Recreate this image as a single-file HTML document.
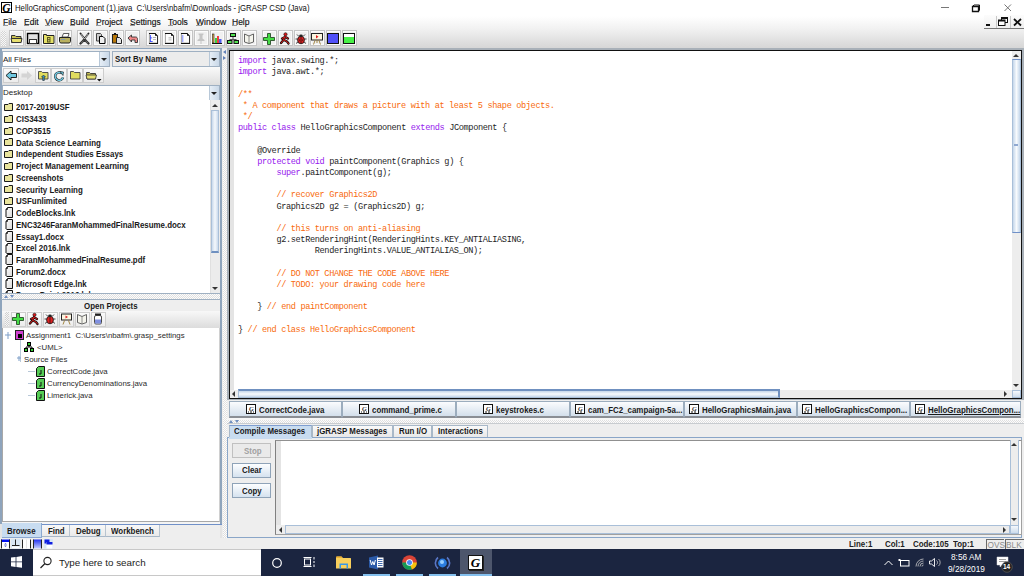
<!DOCTYPE html>
<html><head><meta charset="utf-8">
<style>
*{box-sizing:border-box;margin:0;padding:0}
html,body{width:1024px;height:576px;overflow:hidden;background:#eeeeee;font-family:"Liberation Sans",sans-serif;color:#000}
.a{position:absolute}
.t{position:absolute;white-space:nowrap;line-height:1}
.b{font-weight:bold}
.cx{transform:scaleX(.92);transform-origin:0 0}
svg{position:absolute;overflow:visible}
.tb{position:absolute;top:30px;width:15px;height:16px;border:1px solid #c4c4c4;box-shadow:inset 0 0 0 1px #fbfbfb;background:#f0f0f0}
.code{position:absolute;font-family:"Liberation Mono",monospace;font-size:8.6px;letter-spacing:-0.36px;white-space:pre;line-height:11.2px;color:#1e1e1e}
.kw{color:#9618ee}
.cm{color:#f86a0c}
.fl{position:absolute;left:16px;font-weight:bold;font-size:8.6px;transform:scaleX(.92);transform-origin:0 0;white-space:nowrap;line-height:1;color:#1a1a1a}
.ftab{position:absolute;top:401px;height:17px;background:linear-gradient(#fbfcfe,#d3dfeb);border:1px solid #9cadbe;border-bottom:2px solid #8a8e94;font-size:8px;font-weight:bold;white-space:nowrap;color:#1a1a1a}
.gi{position:absolute;top:3px;width:10px;height:10px;border:1px solid #111;background:#fff}
.mtab{position:absolute;top:425px;height:13px;background:linear-gradient(#fafafa,#e6e6e6);border:1px solid #a8b8c8;border-bottom:none;font-size:8px;font-weight:bold;white-space:nowrap;color:#1a1a1a}
.btn{position:absolute;left:232px;width:39px;height:15px;border:1px solid #8fa3b8;background:linear-gradient(#fdfeff,#d5e2ef);font-size:8px;font-weight:bold;text-align:center;line-height:15px;color:#1a1a1a}
.tr{position:absolute;font-size:7.8px;white-space:nowrap;line-height:1;color:#2a2a2a}
</style></head><body>
<div class="a" style="left:0px;top:0px;width:1024px;height:14px;background:#fff"></div>
<div class="a" style="left:1px;top:2px;width:11px;height:11px;border:1px solid #000;background:#fff;font-family:'Liberation Serif',serif;font-weight:bold;font-style:italic;font-size:11.5px;line-height:10px;text-align:center;color:#000">G</div>
<div class="t" style="left:14.5px;top:3.7px;font-size:8.8px;color:#111;transform:scaleX(.885);transform-origin:0 0">HelloGraphicsComponent (1).java&nbsp; C:\Users\nbafm\Downloads - jGRASP CSD (Java)</div>
<div class="a" style="left:941px;top:7px;width:8px;height:1px;background:#777"></div>
<svg style="left:971px;top:4px" width="10" height="8"><path d="M1.5 2.5V7.5H7.5V2.5Z" fill="none" stroke="#111" stroke-width="1.3"/><path d="M1.5 2.5L3 1H8.5L7.5 2.5M8.5 1V6L7.5 7.5" fill="none" stroke="#111" stroke-width="1"/></svg>
<svg style="left:1004px;top:4px" width="8" height="8"><path d="M0.5 0.5L7 7M7 0.5L0.5 7" stroke="#666" stroke-width="0.9"/></svg>
<div class="a" style="left:0px;top:14px;width:1024px;height:15px;background:linear-gradient(#fff 15%,#f1f1f1)"></div>
<div class="t" style="left:3px;top:17.5px;font-size:8.5px;color:#111;-webkit-text-stroke:0.15px #111">File</div>
<div class="a" style="left:3px;top:25px;width:5px;height:1px;background:#999"></div>
<div class="t" style="left:24px;top:17.5px;font-size:8.5px;color:#111;-webkit-text-stroke:0.15px #111">Edit</div>
<div class="a" style="left:24px;top:25px;width:5px;height:1px;background:#999"></div>
<div class="t" style="left:45px;top:17.5px;font-size:8.5px;color:#111;-webkit-text-stroke:0.15px #111">View</div>
<div class="a" style="left:45px;top:25px;width:5px;height:1px;background:#999"></div>
<div class="t" style="left:70px;top:17.5px;font-size:8.5px;color:#111;-webkit-text-stroke:0.15px #111">Build</div>
<div class="a" style="left:70px;top:25px;width:5px;height:1px;background:#999"></div>
<div class="t" style="left:96px;top:17.5px;font-size:8.5px;color:#111;-webkit-text-stroke:0.15px #111">Project</div>
<div class="a" style="left:96px;top:25px;width:5px;height:1px;background:#999"></div>
<div class="t" style="left:130px;top:17.5px;font-size:8.5px;color:#111;-webkit-text-stroke:0.15px #111">Settings</div>
<div class="a" style="left:130px;top:25px;width:5px;height:1px;background:#999"></div>
<div class="t" style="left:168px;top:17.5px;font-size:8.5px;color:#111;-webkit-text-stroke:0.15px #111">Tools</div>
<div class="a" style="left:168px;top:25px;width:5px;height:1px;background:#999"></div>
<div class="t" style="left:196px;top:17.5px;font-size:8.5px;color:#111;-webkit-text-stroke:0.15px #111">Window</div>
<div class="a" style="left:196px;top:25px;width:6px;height:1px;background:#999"></div>
<div class="t" style="left:232px;top:17.5px;font-size:8.5px;color:#111;-webkit-text-stroke:0.15px #111">Help</div>
<div class="a" style="left:232px;top:25px;width:5px;height:1px;background:#999"></div>
<div class="a" style="left:984px;top:15px;width:40px;height:14px;background:linear-gradient(#fcfcfc,#f0f0f0);border-bottom:1px solid #777"></div>
<div class="a" style="left:996px;top:16px;width:1px;height:12px;background:#c8c8c8"></div>
<div class="a" style="left:1010px;top:16px;width:1px;height:12px;background:#c8c8c8"></div>
<div class="a" style="left:986px;top:24px;width:4px;height:1.5px;background:#111"></div>
<svg style="left:998px;top:17px" width="11" height="9"><rect x="3.5" y="0.5" width="6" height="5" fill="none" stroke="#111" stroke-width="1"/><rect x="3.5" y="0.5" width="6" height="1.5" fill="#111"/><rect x="0.5" y="3" width="6.5" height="5.5" fill="#fff" stroke="#111" stroke-width="1"/><rect x="0.5" y="3" width="6.5" height="1.5" fill="#111"/></svg>
<svg style="left:1013px;top:18px" width="9" height="8"><path d="M1 1L8 7.5M8 1L1 7.5" stroke="#111" stroke-width="1.8"/></svg>
<div class="a" style="left:0px;top:29px;width:1024px;height:19px;background:linear-gradient(#f1f1f1,#d6d6d6)"></div>
<div class="a" style="left:0px;top:48px;width:1024px;height:1px;background:#7d8e9e"></div>
<div class="a" style="left:1px;top:31px;width:5px;height:15px;background:conic-gradient(#d4d4d4 25%,#f8f8f8 0 50%,#d4d4d4 0 75%,#f8f8f8 0) 0 0/2px 2px"></div>
<div class="tb" style="left:9px"></div>
<div class="tb" style="left:25px"></div>
<div class="tb" style="left:41px"></div>
<div class="tb" style="left:57px"></div>
<div class="tb" style="left:77px"></div>
<div class="tb" style="left:93px"></div>
<div class="tb" style="left:109px"></div>
<div class="tb" style="left:125px"></div>
<div class="tb" style="left:146px"></div>
<div class="tb" style="left:162px"></div>
<div class="tb" style="left:178px"></div>
<div class="tb" style="left:194px"></div>
<div class="tb" style="left:210px"></div>
<div class="tb" style="left:226px"></div>
<div class="tb" style="left:242px"></div>
<div class="tb" style="left:262px"></div>
<div class="tb" style="left:278px"></div>
<div class="tb" style="left:294px"></div>
<div class="tb" style="left:310px"></div>
<div class="tb" style="left:326px"></div>
<div class="tb" style="left:342px"></div>
<div class="a" style="left:0px;top:48px;width:222px;height:490px;background:#eeeeee;border:1px solid #8ea4bc;border-width:1px 2px 0 2px"></div>
<div class="a" style="left:2px;top:51px;width:108px;height:16px;background:#fff;border:1px solid #9fb0c2"></div>
<div class="a" style="left:99px;top:52px;width:10px;height:14px;background:linear-gradient(90deg,#e6eef6,#c9d8e8);border-left:1px solid #b8c8d8"></div>
<div class="t" style="left:3px;top:56px;font-size:8px;color:#222">All Files</div>
<div class="a" style="left:112px;top:51px;width:108px;height:16px;background:#ececec;border:1px solid #9fb0c2"></div>
<div class="a" style="left:209px;top:52px;width:10px;height:14px;background:linear-gradient(90deg,#e6eef6,#c9d8e8);border-left:1px solid #b8c8d8"></div>
<div class="t b cx" style="left:114.5px;top:54.70px;font-size:8.6px;color:#1a1a1a;">Sort By Name</div>
<div class="a" style="left:2px;top:67px;width:218px;height:18px;background:linear-gradient(#fafafa,#dedede)"></div>
<div class="a" style="left:3px;top:68px;width:16px;height:15px;border:1px solid #cdcdcd;background:linear-gradient(#fafafa,#ececec)"></div>
<div class="a" style="left:35px;top:68px;width:16px;height:15px;border:1px solid #cdcdcd;background:linear-gradient(#fafafa,#ececec)"></div>
<div class="a" style="left:51px;top:68px;width:16px;height:15px;border:1px solid #cdcdcd;background:linear-gradient(#fafafa,#ececec)"></div>
<div class="a" style="left:67px;top:68px;width:16px;height:15px;border:1px solid #cdcdcd;background:linear-gradient(#fafafa,#ececec)"></div>
<div class="a" style="left:83px;top:68px;width:21px;height:15px;border:1px solid #cdcdcd;background:linear-gradient(#fafafa,#ececec)"></div>
<div class="a" style="left:2px;top:85px;width:218px;height:16px;background:#fff;border:1px solid #9fb0c2"></div>
<div class="a" style="left:209px;top:86px;width:10px;height:14px;background:linear-gradient(90deg,#e6eef6,#c9d8e8);border-left:1px solid #b8c8d8"></div>
<div class="t" style="left:3px;top:89px;font-size:8px;color:#222">Desktop</div>
<svg style="left:101px;top:58px" width="6" height="4"><path d="M0 0H6L3 3Z" fill="#222"/></svg>
<svg style="left:211px;top:58px" width="6" height="4"><path d="M0 0H6L3 3Z" fill="#222"/></svg>
<svg style="left:211px;top:92px" width="6" height="4"><path d="M0 0H6L3 3Z" fill="#222"/></svg>
<div class="a" style="left:2px;top:100px;width:218px;height:194px;background:#fff;border-bottom:1px solid #9fb0c2"></div>
<div class="a" style="left:2px;top:100px;width:208px;height:193px;overflow:hidden">
<svg style="left:2px;top:3.00px" width="10" height="8"><path d="M0.5 1.5H4L5 0.5H8.5V7.5H0.5Z" fill="#e8e49c" stroke="#1a1a1a" stroke-width="1"/></svg>
<div class="fl" style="left:14px;top:3.40px">2017-2019USF</div>
<svg style="left:2px;top:14.75px" width="10" height="8"><path d="M0.5 1.5H4L5 0.5H8.5V7.5H0.5Z" fill="#e8e49c" stroke="#1a1a1a" stroke-width="1"/></svg>
<div class="fl" style="left:14px;top:15.15px">CIS3433</div>
<svg style="left:2px;top:26.50px" width="10" height="8"><path d="M0.5 1.5H4L5 0.5H8.5V7.5H0.5Z" fill="#e8e49c" stroke="#1a1a1a" stroke-width="1"/></svg>
<div class="fl" style="left:14px;top:26.90px">COP3515</div>
<svg style="left:2px;top:38.25px" width="10" height="8"><path d="M0.5 1.5H4L5 0.5H8.5V7.5H0.5Z" fill="#e8e49c" stroke="#1a1a1a" stroke-width="1"/></svg>
<div class="fl" style="left:14px;top:38.65px">Data Science Learning</div>
<svg style="left:2px;top:50.00px" width="10" height="8"><path d="M0.5 1.5H4L5 0.5H8.5V7.5H0.5Z" fill="#e8e49c" stroke="#1a1a1a" stroke-width="1"/></svg>
<div class="fl" style="left:14px;top:50.40px">Independent Studies Essays</div>
<svg style="left:2px;top:61.75px" width="10" height="8"><path d="M0.5 1.5H4L5 0.5H8.5V7.5H0.5Z" fill="#e8e49c" stroke="#1a1a1a" stroke-width="1"/></svg>
<div class="fl" style="left:14px;top:62.15px">Project Management Learning</div>
<svg style="left:2px;top:73.50px" width="10" height="8"><path d="M0.5 1.5H4L5 0.5H8.5V7.5H0.5Z" fill="#e8e49c" stroke="#1a1a1a" stroke-width="1"/></svg>
<div class="fl" style="left:14px;top:73.90px">Screenshots</div>
<svg style="left:2px;top:85.25px" width="10" height="8"><path d="M0.5 1.5H4L5 0.5H8.5V7.5H0.5Z" fill="#e8e49c" stroke="#1a1a1a" stroke-width="1"/></svg>
<div class="fl" style="left:14px;top:85.65px">Security Learning</div>
<svg style="left:2px;top:97.00px" width="10" height="8"><path d="M0.5 1.5H4L5 0.5H8.5V7.5H0.5Z" fill="#e8e49c" stroke="#1a1a1a" stroke-width="1"/></svg>
<div class="fl" style="left:14px;top:97.40px">USFunlimited</div>
<svg style="left:3px;top:107.25px" width="9" height="12"><defs><linearGradient id="dg9" x1="0" y1="0" x2="1" y2="1"><stop offset="0" stop-color="#fff"/><stop offset="1" stop-color="#d8d8d8"/></linearGradient></defs><path d="M1 10.5V2.5L2.5 0.5H7.5V10.5Z" fill="url(#dg9)"/><path d="M1 10V2.5L2.5 0.5H7.5V10.5H1.5" fill="none" stroke="#111" stroke-width="1"/><path d="M1 2.5H2.5V1" stroke="#111" stroke-width="0.8" fill="none"/></svg>
<div class="fl" style="left:14px;top:109.15px">CodeBlocks.lnk</div>
<svg style="left:3px;top:119.00px" width="9" height="12"><defs><linearGradient id="dg10" x1="0" y1="0" x2="1" y2="1"><stop offset="0" stop-color="#fff"/><stop offset="1" stop-color="#d8d8d8"/></linearGradient></defs><path d="M1 10.5V2.5L2.5 0.5H7.5V10.5Z" fill="url(#dg10)"/><path d="M1 10V2.5L2.5 0.5H7.5V10.5H1.5" fill="none" stroke="#111" stroke-width="1"/><path d="M1 2.5H2.5V1" stroke="#111" stroke-width="0.8" fill="none"/></svg>
<div class="fl" style="left:14px;top:120.90px">ENC3246FaranMohammedFinalResume.docx</div>
<svg style="left:3px;top:130.75px" width="9" height="12"><defs><linearGradient id="dg11" x1="0" y1="0" x2="1" y2="1"><stop offset="0" stop-color="#fff"/><stop offset="1" stop-color="#d8d8d8"/></linearGradient></defs><path d="M1 10.5V2.5L2.5 0.5H7.5V10.5Z" fill="url(#dg11)"/><path d="M1 10V2.5L2.5 0.5H7.5V10.5H1.5" fill="none" stroke="#111" stroke-width="1"/><path d="M1 2.5H2.5V1" stroke="#111" stroke-width="0.8" fill="none"/></svg>
<div class="fl" style="left:14px;top:132.65px">Essay1.docx</div>
<svg style="left:3px;top:142.50px" width="9" height="12"><defs><linearGradient id="dg12" x1="0" y1="0" x2="1" y2="1"><stop offset="0" stop-color="#fff"/><stop offset="1" stop-color="#d8d8d8"/></linearGradient></defs><path d="M1 10.5V2.5L2.5 0.5H7.5V10.5Z" fill="url(#dg12)"/><path d="M1 10V2.5L2.5 0.5H7.5V10.5H1.5" fill="none" stroke="#111" stroke-width="1"/><path d="M1 2.5H2.5V1" stroke="#111" stroke-width="0.8" fill="none"/></svg>
<div class="fl" style="left:14px;top:144.40px">Excel 2016.lnk</div>
<svg style="left:3px;top:154.25px" width="9" height="12"><defs><linearGradient id="dg13" x1="0" y1="0" x2="1" y2="1"><stop offset="0" stop-color="#fff"/><stop offset="1" stop-color="#d8d8d8"/></linearGradient></defs><path d="M1 10.5V2.5L2.5 0.5H7.5V10.5Z" fill="url(#dg13)"/><path d="M1 10V2.5L2.5 0.5H7.5V10.5H1.5" fill="none" stroke="#111" stroke-width="1"/><path d="M1 2.5H2.5V1" stroke="#111" stroke-width="0.8" fill="none"/></svg>
<div class="fl" style="left:14px;top:156.15px">FaranMohammedFinalResume.pdf</div>
<svg style="left:3px;top:166.00px" width="9" height="12"><defs><linearGradient id="dg14" x1="0" y1="0" x2="1" y2="1"><stop offset="0" stop-color="#fff"/><stop offset="1" stop-color="#d8d8d8"/></linearGradient></defs><path d="M1 10.5V2.5L2.5 0.5H7.5V10.5Z" fill="url(#dg14)"/><path d="M1 10V2.5L2.5 0.5H7.5V10.5H1.5" fill="none" stroke="#111" stroke-width="1"/><path d="M1 2.5H2.5V1" stroke="#111" stroke-width="0.8" fill="none"/></svg>
<div class="fl" style="left:14px;top:167.90px">Forum2.docx</div>
<svg style="left:3px;top:177.75px" width="9" height="12"><defs><linearGradient id="dg15" x1="0" y1="0" x2="1" y2="1"><stop offset="0" stop-color="#fff"/><stop offset="1" stop-color="#d8d8d8"/></linearGradient></defs><path d="M1 10.5V2.5L2.5 0.5H7.5V10.5Z" fill="url(#dg15)"/><path d="M1 10V2.5L2.5 0.5H7.5V10.5H1.5" fill="none" stroke="#111" stroke-width="1"/><path d="M1 2.5H2.5V1" stroke="#111" stroke-width="0.8" fill="none"/></svg>
<div class="fl" style="left:14px;top:179.65px">Microsoft Edge.lnk</div>
<svg style="left:3px;top:189.50px" width="9" height="12"><defs><linearGradient id="dg16" x1="0" y1="0" x2="1" y2="1"><stop offset="0" stop-color="#fff"/><stop offset="1" stop-color="#d8d8d8"/></linearGradient></defs><path d="M1 10.5V2.5L2.5 0.5H7.5V10.5Z" fill="url(#dg16)"/><path d="M1 10V2.5L2.5 0.5H7.5V10.5H1.5" fill="none" stroke="#111" stroke-width="1"/><path d="M1 2.5H2.5V1" stroke="#111" stroke-width="0.8" fill="none"/></svg>
<div class="fl" style="left:14px;top:191.40px">PowerPoint 2016.lnk</div>
</div>
<div class="a" style="left:210px;top:100px;width:10px;height:193px;background:#ececec;border-left:1px solid #e0e0e0"></div>
<div class="a" style="left:211px;top:110px;width:8px;height:143px;background:linear-gradient(90deg,#c9d9ec,#f4f8fc 50%,#c9d9ec);border:1px solid #a9bfd8;border-bottom:2px solid #6f90c0"></div>
<svg style="left:212px;top:104px" width="6" height="4"><path d="M0 3H6L3 0Z" fill="#333"/></svg>
<svg style="left:212px;top:287px" width="6" height="4"><path d="M0 0H6L3 3Z" fill="#333"/></svg>
<div class="a" style="left:2px;top:294px;width:218px;height:5px;background:conic-gradient(#e0e0e0 25%,#fcfcfc 0 50%,#e0e0e0 0 75%,#fcfcfc 0) 0 0/2px 2px"></div>
<svg style="left:4px;top:295px" width="12" height="4"><path d="M0 3H4L2 0Z M6 0H10L8 3Z" fill="#6f8fc0"/></svg>
<div class="a" style="left:1px;top:299px;width:220px;height:1px;background:#9fb0c2"></div>
<div class="t b cx" style="left:84px;top:301.50px;font-size:8.6px;color:#1a1a1a;">Open Projects</div>
<div class="a" style="left:2px;top:311px;width:218px;height:17px;background:linear-gradient(#f8f8f8,#dcdcdc)"></div>
<div class="a" style="left:5px;top:312px;width:4px;height:14px;background:conic-gradient(#d0d0d0 25%,#f6f6f6 0 50%,#d0d0d0 0 75%,#f6f6f6 0) 0 0/2px 2px"></div>
<div class="a" style="left:11px;top:312px;width:15px;height:15px;border:1px solid #cdcdcd;background:linear-gradient(#fafafa,#ececec)"></div>
<div class="a" style="left:27px;top:312px;width:15px;height:15px;border:1px solid #cdcdcd;background:linear-gradient(#fafafa,#ececec)"></div>
<div class="a" style="left:43px;top:312px;width:15px;height:15px;border:1px solid #cdcdcd;background:linear-gradient(#fafafa,#ececec)"></div>
<div class="a" style="left:59px;top:312px;width:15px;height:15px;border:1px solid #cdcdcd;background:linear-gradient(#fafafa,#ececec)"></div>
<div class="a" style="left:75px;top:312px;width:15px;height:15px;border:1px solid #cdcdcd;background:linear-gradient(#fafafa,#ececec)"></div>
<div class="a" style="left:91px;top:312px;width:15px;height:15px;border:1px solid #cdcdcd;background:linear-gradient(#fafafa,#ececec)"></div>
<div class="a" style="left:2px;top:328px;width:218px;height:194px;background:#fff"></div>
<svg style="left:4px;top:332px" width="8" height="8"><path d="M4 0V7M1 3H7" stroke="#7f9fc8" stroke-width="1"/></svg>
<div class="a" style="left:15px;top:330px;width:9px;height:10px;background:#d040d0;border:1px solid #222"></div>
<div class="a" style="left:18px;top:334px;width:4px;height:4px;background:#000"></div>
<div class="tr" style="left:26px;top:332px">Assignment1&nbsp; C:\Users\nbafm\.grasp_settings</div>
<div class="a" style="left:20px;top:340px;width:1px;height:22px;background:#b8c8d8"></div>
<svg style="left:24px;top:342px" width="11" height="10"><rect x="3.5" y="0.5" width="3" height="3" fill="#3c3" stroke="#000"/><rect x="0.5" y="6.5" width="3" height="3" fill="#3c3" stroke="#000"/><rect x="6.5" y="6.5" width="3" height="3" fill="#3c3" stroke="#000"/><path d="M5 3V5M2 5H8V7M2 5V7" stroke="#000" fill="none"/></svg>
<div class="tr" style="left:37px;top:344px">&lt;UML&gt;</div>
<svg style="left:16px;top:356px" width="6" height="6"><path d="M3 0V5M1 2H5" stroke="#7f9fc8"/></svg>
<div class="tr" style="left:24px;top:356px">Source Files</div>
<div class="a" style="left:28px;top:371.0px;width:7px;height:1px;background:#b8c8d8"></div>
<svg style="left:36px;top:366.00px" width="9" height="11"><path d="M0.5 10.5V2.5L2.5 0.5H8.5V10.5Z" fill="#5c5" stroke="#111"/><path d="M5 4V8H3" stroke="#111" fill="none"/></svg>
<div class="tr" style="left:47px;top:368.00px">CorrectCode.java</div>
<div class="a" style="left:28px;top:382.75px;width:7px;height:1px;background:#b8c8d8"></div>
<svg style="left:36px;top:377.75px" width="9" height="11"><path d="M0.5 10.5V2.5L2.5 0.5H8.5V10.5Z" fill="#5c5" stroke="#111"/><path d="M5 4V8H3" stroke="#111" fill="none"/></svg>
<div class="tr" style="left:47px;top:379.75px">CurrencyDenominations.java</div>
<div class="a" style="left:28px;top:394.5px;width:7px;height:1px;background:#b8c8d8"></div>
<svg style="left:36px;top:389.50px" width="9" height="11"><path d="M0.5 10.5V2.5L2.5 0.5H8.5V10.5Z" fill="#5c5" stroke="#111"/><path d="M5 4V8H3" stroke="#111" fill="none"/></svg>
<div class="tr" style="left:47px;top:391.50px">Limerick.java</div>
<div class="a" style="left:0px;top:524px;width:2px;height:14px;background:#e4e4e4"></div>
<div class="a" style="left:220px;top:524px;width:2px;height:14px;background:#e4e4e4"></div>
<div class="a" style="left:2px;top:328px;width:218px;height:194px;border:1px solid #a8a8a8;border-right-color:#d0d0d0;border-top:none"></div>
<div class="a" style="left:2px;top:522px;width:218px;height:2px;background:#f4f4f4"></div>
<div class="a" style="left:42px;top:524px;width:180px;height:1px;background:#7090c8"></div>
<div class="a" style="left:2px;top:523px;width:40px;height:14.5px;background:#c8dcf0;border-right:1px solid #8aa8d0;border-bottom:1px solid #8aa8d0"></div>
<div class="t b cx" style="left:7px;top:527.20px;font-size:8.6px;color:#1a1a1a;">Browse</div>
<div class="a" style="left:42px;top:525px;width:27.5px;height:12px;background:linear-gradient(#f8f8f8,#eaeaea);border-right:1px solid #b8c4d0;border-bottom:1px solid #a8b8c8"></div>
<div class="t b cx" style="left:47.6px;top:527.20px;font-size:8.6px;color:#1a1a1a;">Find</div>
<div class="a" style="left:69.5px;top:525px;width:36px;height:12px;background:linear-gradient(#f8f8f8,#eaeaea);border-right:1px solid #b8c4d0;border-bottom:1px solid #a8b8c8"></div>
<div class="t b cx" style="left:75.5px;top:527.20px;font-size:8.6px;color:#1a1a1a;">Debug</div>
<div class="a" style="left:105.5px;top:525px;width:54px;height:12px;background:linear-gradient(#f8f8f8,#eaeaea);border-right:1px solid #b8c4d0;border-bottom:1px solid #a8b8c8"></div>
<div class="t b cx" style="left:110.8px;top:527.20px;font-size:8.6px;color:#1a1a1a;">Workbench</div>
<div class="a" style="left:222px;top:48px;width:6px;height:490px;background:#eeeeee"></div>
<div class="a" style="left:223px;top:62px;width:4px;height:476px;background:conic-gradient(#e0e0e0 25%,#fcfcfc 0 50%,#e0e0e0 0 75%,#fcfcfc 0) 0 0/2px 2px"></div>
<svg style="left:223px;top:50px" width="4" height="11"><path d="M3 0V4L0 2Z M0 6V10L3 8Z" fill="#5f7fb8"/></svg>
<div class="a" style="left:227px;top:48px;width:797px;height:352px;background:#a8b0b8"></div>
<div class="a" style="left:229px;top:50px;width:793px;height:349px;border:1.5px solid #111;background:#fff"></div>
<div class="a" style="left:230px;top:51px;width:4px;height:339px;background:#e4e4e4"></div>
<div class="a" style="left:1012px;top:51px;width:9px;height:339px;background:#ededed"></div>
<div class="a" style="left:1012px;top:59px;width:9px;height:174px;background:linear-gradient(90deg,#c4d6ea,#f7fafd 50%,#c4d6ea);border:1px solid #a9bfd8;border-top:1px solid #7090c8;border-bottom:1px solid #7090c8"></div>
<div class="a" style="left:1014px;top:144px;width:4px;height:2px;background:#8fa8d0"></div>
<svg style="left:1013px;top:54px" width="6" height="4"><path d="M0 3H6L3 0Z" fill="#333"/></svg>
<svg style="left:1013px;top:384px" width="6" height="4"><path d="M0 0H6L3 3Z" fill="#333"/></svg>
<div class="a" style="left:230px;top:390px;width:782px;height:8px;background:#ededed"></div>
<div class="a" style="left:238px;top:389px;width:542px;height:9px;background:linear-gradient(#c4d6ea,#f7fafd 50%,#c4d6ea);border:1px solid #a9bfd8;border-top:2px solid #6f90c0;border-right:2px solid #6f90c0"></div>
<svg style="left:232px;top:391px" width="4" height="6"><path d="M3 0V6L0 3Z" fill="#333"/></svg>
<svg style="left:1004px;top:391px" width="4" height="6"><path d="M0 0V6L3 3Z" fill="#333"/></svg>
<div class="a" style="left:1012px;top:390px;width:9px;height:8px;background:linear-gradient(#f5f8fc,#cddcec);border:1px solid #a9bfd8"></div>
<div class="code" style="left:238px;top:56px"><span class="kw">import</span> javax.swing.*;
<span class="kw">import</span> java.awt.*;

<span class="cm">/**
 * A component that draws a picture with at least 5 shape objects.
 */</span>
<span class="kw">public</span> <span class="kw">class</span> HelloGraphicsComponent <span class="kw">extends</span> JComponent {

    @Override
    <span class="kw">protected</span> <span class="kw">void</span> paintComponent(Graphics g) {
        <span class="kw">super</span>.paintComponent(g);

        <span class="cm">// recover Graphics2D</span>
        Graphics2D g2 = (Graphics2D) g;

        <span class="cm">// this turns on anti-aliasing</span>
        g2.setRenderingHint(RenderingHints.KEY_ANTIALIASING,
                RenderingHints.VALUE_ANTIALIAS_ON);

        <span class="cm">// DO NOT CHANGE THE CODE ABOVE HERE</span>
        <span class="cm">// TODO: your drawing code here</span>

    } <span class="cm">// end paintComponent</span>

} <span class="cm">// end class HelloGraphicsComponent</span></div>
<div class="a" style="left:227px;top:400px;width:797px;height:18px;background:#eeeeee"></div>
<div class="ftab" style="left:229px;width:113px"></div>
<div class="gi" style="left:246px;top:404px"><div style="position:absolute;left:2px;top:0.5px;font-family:Liberation Serif;font-style:italic;font-weight:bold;font-size:6.5px;line-height:6px;color:#222">G</div><div style="position:absolute;left:1px;top:6px;width:6px;height:2px;background:repeating-linear-gradient(90deg,#888 0 1px,#fff 1px 1.5px)"></div></div>
<div class="t b cx" style="left:259px;top:405.6px;font-size:8.6px;color:#1a1a1a">CorrectCode.java</div>
<div class="ftab" style="left:342px;width:114px"></div>
<div class="gi" style="left:359px;top:404px"><div style="position:absolute;left:2px;top:0.5px;font-family:Liberation Serif;font-style:italic;font-weight:bold;font-size:6.5px;line-height:6px;color:#222">G</div><div style="position:absolute;left:1px;top:6px;width:6px;height:2px;background:repeating-linear-gradient(90deg,#888 0 1px,#fff 1px 1.5px)"></div></div>
<div class="t b cx" style="left:372px;top:405.6px;font-size:8.6px;color:#1a1a1a">command_prime.c</div>
<div class="ftab" style="left:456px;width:114px"></div>
<div class="gi" style="left:483px;top:404px"><div style="position:absolute;left:2px;top:0.5px;font-family:Liberation Serif;font-style:italic;font-weight:bold;font-size:6.5px;line-height:6px;color:#222">G</div><div style="position:absolute;left:1px;top:6px;width:6px;height:2px;background:repeating-linear-gradient(90deg,#888 0 1px,#fff 1px 1.5px)"></div></div>
<div class="t b cx" style="left:496px;top:405.6px;font-size:8.6px;color:#1a1a1a">keystrokes.c</div>
<div class="ftab" style="left:570px;width:114px"></div>
<div class="gi" style="left:575px;top:404px"><div style="position:absolute;left:2px;top:0.5px;font-family:Liberation Serif;font-style:italic;font-weight:bold;font-size:6.5px;line-height:6px;color:#222">G</div><div style="position:absolute;left:1px;top:6px;width:6px;height:2px;background:repeating-linear-gradient(90deg,#888 0 1px,#fff 1px 1.5px)"></div></div>
<div class="t b cx" style="left:588px;top:405.6px;font-size:8.6px;color:#1a1a1a">cam_FC2_campaign-5a...</div>
<div class="ftab" style="left:684px;width:113px"></div>
<div class="gi" style="left:689px;top:404px"><div style="position:absolute;left:2px;top:0.5px;font-family:Liberation Serif;font-style:italic;font-weight:bold;font-size:6.5px;line-height:6px;color:#222">G</div><div style="position:absolute;left:1px;top:6px;width:6px;height:2px;background:repeating-linear-gradient(90deg,#888 0 1px,#fff 1px 1.5px)"></div></div>
<div class="t b cx" style="left:702px;top:405.6px;font-size:8.6px;color:#1a1a1a">HelloGraphicsMain.java</div>
<div class="ftab" style="left:797px;width:113px"></div>
<div class="gi" style="left:802px;top:404px"><div style="position:absolute;left:2px;top:0.5px;font-family:Liberation Serif;font-style:italic;font-weight:bold;font-size:6.5px;line-height:6px;color:#222">G</div><div style="position:absolute;left:1px;top:6px;width:6px;height:2px;background:repeating-linear-gradient(90deg,#888 0 1px,#fff 1px 1.5px)"></div></div>
<div class="t b cx" style="left:815px;top:405.6px;font-size:8.6px;color:#1a1a1a">HelloGraphicsCompon...</div>
<div class="ftab" style="left:910px;width:111px"></div>
<div class="gi" style="left:915px;top:404px"><div style="position:absolute;left:2px;top:0.5px;font-family:Liberation Serif;font-style:italic;font-weight:bold;font-size:6.5px;line-height:6px;color:#222">G</div><div style="position:absolute;left:1px;top:6px;width:6px;height:2px;background:repeating-linear-gradient(90deg,#888 0 1px,#fff 1px 1.5px)"></div></div>
<div class="t b cx" style="left:928px;top:405.6px;font-size:8.6px;color:#1a1a1a;text-decoration:underline">HelloGraphicsCompon...</div>
<div class="a" style="left:227px;top:418px;width:797px;height:6px;background:#f6f6f6"></div>
<div class="a" style="left:227px;top:420px;width:797px;height:3px;background:conic-gradient(#e0e0e0 25%,#fcfcfc 0 50%,#e0e0e0 0 75%,#fcfcfc 0) 0 0/2px 2px"></div>
<div class="a" style="left:227px;top:423px;width:797px;height:1px;background:#c8ccd0"></div>
<svg style="left:229px;top:420px" width="12" height="4"><path d="M0 3H4L2 0Z M6 0H10L8 3Z" fill="#6f8fc0"/></svg>
<div class="mtab" style="left:229px;width:83px;background:#c8dcf0;border-top-color:#7f9ed0"></div>
<div class="mtab" style="left:312px;width:81px;background:linear-gradient(#fafafa,#e6e6e6)"></div>
<div class="mtab" style="left:393px;width:39px;background:linear-gradient(#fafafa,#e6e6e6)"></div>
<div class="mtab" style="left:432px;width:56px;background:linear-gradient(#fafafa,#e6e6e6)"></div>
<div class="t b cx" style="left:234.4px;top:426.50px;font-size:8.6px;color:#1a1a1a;">Compile Messages</div>
<div class="t b cx" style="left:316.6px;top:426.50px;font-size:8.6px;color:#1a1a1a;">jGRASP Messages</div>
<div class="t b cx" style="left:399.2px;top:426.50px;font-size:8.6px;color:#1a1a1a;">Run I/O</div>
<div class="t b cx" style="left:437.7px;top:426.50px;font-size:8.6px;color:#1a1a1a;">Interactions</div>
<div class="a" style="left:227px;top:437px;width:795px;height:101px;border:1px solid #8aa6c8;background:#eeeeee"></div>
<div class="btn" style="top:443px;border-color:#c0c0c0;background:#eaeaea"></div>
<div class="btn" style="top:463px"></div>
<div class="btn" style="top:483px"></div>
<div class="t b cx" style="left:243.7px;top:446.70px;font-size:8.6px;color:#a0a0a0;">Stop</div>
<div class="t b cx" style="left:241.6px;top:466.40px;font-size:8.6px;color:#1a1a1a;">Clear</div>
<div class="t b cx" style="left:242px;top:486.70px;font-size:8.6px;color:#1a1a1a;">Copy</div>
<div class="a" style="left:229px;top:437px;width:83px;height:2px;background:#c8dcf0"></div>
<div class="a" style="left:275px;top:440px;width:747px;height:95px;background:#fff;border:1px solid #a0a0a0;border-top-color:#909090;border-left-color:#808080"></div>
<div class="a" style="left:276px;top:441px;width:5px;height:84px;background:#e4e4e4"></div>
<div class="a" style="left:1010px;top:440px;width:9px;height:85px;background:#ededed;border-left:1px solid #a9bfd8;border-right:1px solid #a9bfd8"></div>
<svg style="left:1011px;top:443px" width="6" height="4"><path d="M0 3H6L3 0Z" fill="#333"/></svg>
<svg style="left:1011px;top:518px" width="6" height="4"><path d="M0 0H6L3 3Z" fill="#333"/></svg>
<div class="a" style="left:276px;top:525px;width:734px;height:9px;background:#ededed"></div>
<div class="a" style="left:285px;top:525px;width:725px;height:9px;background:#ececec;border:1px solid #a9bfd8"></div>
<svg style="left:279px;top:527px" width="4" height="6"><path d="M3 0V6L0 3Z" fill="#333"/></svg>
<svg style="left:1003px;top:527px" width="4" height="6"><path d="M0 0V6L3 3Z" fill="#333"/></svg>
<div class="a" style="left:1010px;top:525px;width:9px;height:9px;background:linear-gradient(#f5f8fc,#cddcec);border:1px solid #a9bfd8"></div>
<div class="a" style="left:0px;top:538px;width:1024px;height:11px;background:#eeeeee"></div>
<div class="t b cx" style="left:849px;top:539.70px;font-size:8.6px;color:#222;">Line:1</div>
<div class="t b cx" style="left:885px;top:539.70px;font-size:8.6px;color:#222;">Col:1</div>
<div class="t b cx" style="left:913px;top:539.70px;font-size:8.6px;color:#222;">Code:105</div>
<div class="t b cx" style="left:953px;top:539.70px;font-size:8.6px;color:#222;">Top:1</div>
<div class="a" style="left:986px;top:539px;width:18px;height:10px;border-top:1px solid #6a6a6a;border-left:1px solid #6a6a6a"></div>
<div class="a" style="left:1005px;top:539px;width:19px;height:10px;border-top:1px solid #6a6a6a;border-left:1px solid #6a6a6a"></div>
<div class="t" style="left:987.5px;top:541px;font-size:8.3px;color:#8a8a8a">OVS</div>
<div class="t" style="left:1006px;top:541px;font-size:8.3px;color:#8a8a8a">BLK</div>
<svg style="left:0;top:539px" width="56" height="10"><rect x="1" y="0.5" width="9" height="9" fill="#fff"/><rect x="1" y="0.5" width="9" height="2.5" fill="#0010f0"/><path d="M1.5 0.5v9M9.5 0.5v9" stroke="#222" stroke-width="1"/><path d="M4 5.5l1.5-1.5 1.5 1.5zM4 6.5l1.5 1.5 1.5-1.5z" fill="#5060d0"/><rect x="11" y="0" width="9.5" height="9.5" fill="#d8e6f4"/><path d="M12 6.5h7.5M15.5 0.5v6" stroke="#222" stroke-width="1"/><rect x="12" y="7.5" width="7.5" height="1.5" fill="#fff"/><rect x="22" y="0.5" width="9" height="9" fill="#fff"/><path d="M22.5 0.5v9M30.5 0.5v9" stroke="#222" stroke-width="1"/><path d="M26.5 0.5v9" stroke="#ddd" stroke-width="0.8"/><rect x="33.5" y="0.5" width="8" height="9" fill="url(#bg1)"/><path d="M33.5 0.5v9M41.5 0.5v9" stroke="#222" stroke-width="1"/><rect x="44" y="0" width="9" height="9.5" fill="#d8e6f4"/><rect x="44.5" y="0.5" width="5" height="4" fill="#1020e0"/><rect x="46.5" y="3" width="6" height="6.5" fill="#fff"/><rect x="46.5" y="3" width="6" height="2.5" fill="#1020e0"/><defs><linearGradient id="bg1" x1="0" y1="0" x2="0" y2="1"><stop offset="0" stop-color="#2030f0"/><stop offset="1" stop-color="#c8d0ff"/></linearGradient></defs></svg>
<div class="a" style="left:0px;top:549px;width:1024px;height:27px;background:#1b2540"></div>
<div class="a" style="left:33px;top:549px;width:228px;height:27px;background:#fff;border-top:1px solid #c8c8c8;border-bottom:1px solid #c8c8c8"></div>
<svg style="left:39px;top:556px" width="14" height="14"><circle cx="8.5" cy="5" r="3.6" fill="none" stroke="#222" stroke-width="1.1"/><path d="M6 7.5L1.5 12" stroke="#222" stroke-width="1.3"/></svg>
<div class="t" style="left:59px;top:558px;font-size:9.8px;color:#222">Type here to search</div>
<svg style="left:11px;top:556px" width="12" height="12"><path d="M0 1.6L4.6 1V5.5H0Z M5.4 0.9L11 0.1V5.5H5.4Z M0 6.3H4.6V10.9L0 10.3Z M5.4 6.3H11V11.8L5.4 11.1Z" fill="#fff"/></svg>
<svg style="left:271px;top:557px" width="12" height="12"><circle cx="6" cy="6" r="4.3" fill="none" stroke="#fff" stroke-width="1.2"/></svg>
<svg style="left:303px;top:556px" width="14" height="13"><rect x="1.5" y="3" width="6" height="6" fill="none" stroke="#fff" stroke-width="1"/><path d="M0.5 1.5h8M0.5 10.5h8M11 1v2.5M11 5v2M11 8.5v2.5" stroke="#fff" stroke-width="1"/></svg>
<svg style="left:336px;top:556px" width="16" height="13"><path d="M0 1.5Q0 0.5 1 0.5H5.5L7 2H14.5Q15 2 15 3V12.5H0Z" fill="#f8cf5c"/><path d="M0 1.5Q0 0.5 1 0.5H5.5L6.5 1.8H0Z" fill="#e6a628"/><path d="M3.5 12.5V7.5H12V12.5H10.5V9H5V12.5Z" fill="#3898e8"/></svg>
<svg style="left:369px;top:555px" width="15" height="15"><path d="M0 2.5L9 0.5V14.5L0 12.5Z" fill="#2b5aa8"/><rect x="8" y="2.5" width="6.5" height="10" fill="#fff"/><path d="M9 4.5h4.5M9 6.5h4.5M9 8.5h4.5M9 10.5h4.5" stroke="#2b5aa8" stroke-width="0.9"/><path d="M1.2 5l1.3 5 1.3-3.5 1.3 3.5 1.3-5" stroke="#fff" stroke-width="1" fill="none"/></svg>
<div class="a" style="left:363px;top:574px;width:27px;height:2px;background:#84c0ee"></div>
<svg style="left:402px;top:555px" width="15" height="15"><circle cx="7.5" cy="7.5" r="7.3" fill="#db4437"/><path d="M7.5 7.5L1.2 11.2A7.3 7.3 0 0 0 10 14.4Z" fill="#0f9d58"/><path d="M7.5 7.5L10 14.4A7.3 7.3 0 0 0 14.8 7.5Z" fill="#f4c20d"/><path d="M7.5 7.5L0.2 7.5A7.3 7.3 0 0 0 1.2 11.2Z" fill="#0f9d58"/><circle cx="7.5" cy="7.5" r="3.3" fill="#fff"/><circle cx="7.5" cy="7.5" r="2.5" fill="#4a8af4"/></svg>
<div class="a" style="left:396px;top:574px;width:27px;height:2px;background:#84c0ee"></div>
<svg style="left:434px;top:555px" width="17" height="16"><path d="M4 2.5A7 7 0 0 0 4 13.5M13 2.5A7 7 0 0 1 13 13.5" stroke="#5a78c8" stroke-width="1.6" fill="none"/><circle cx="8.5" cy="8" r="4.4" fill="#2c7de0"/><circle cx="8" cy="7" r="2" fill="#9ad0ff"/></svg>
<div class="a" style="left:429px;top:574px;width:27px;height:2px;background:#84c0ee"></div>
<div class="a" style="left:460px;top:549px;width:32px;height:27px;background:#4d566c"></div>
<div class="a" style="left:468px;top:555px;width:15px;height:15px;background:#fff;border:1px solid #111;box-shadow:1px 1px 0 #222;font-family:'Liberation Serif',serif;font-weight:bold;font-style:italic;font-size:13px;line-height:14px;text-align:center;color:#000">G</div>
<div class="a" style="left:460px;top:574px;width:32px;height:2px;background:#84c0ee"></div>
<svg style="left:884px;top:560px" width="10" height="6"><path d="M0.5 5L4.5 1 8.5 5" stroke="#fff" stroke-width="1" fill="none"/></svg>
<svg style="left:898px;top:558px" width="12" height="9"><rect x="2.5" y="2.5" width="8.5" height="5.5" fill="none" stroke="#fff" stroke-width="1"/><rect x="0.5" y="1" width="2" height="2" fill="#fff"/></svg>
<svg style="left:915px;top:558px" width="10" height="9"><path d="M1 8.5A7.5 7.5 0 0 1 8.5 1M3 8.5A5.5 5.5 0 0 1 8.5 3M5 8.5A3.5 3.5 0 0 1 8.5 5M7 8.5A1.5 1.5 0 0 1 8.5 7" stroke="#ccc" stroke-width="0.8" fill="none"/></svg>
<svg style="left:929px;top:558px" width="13" height="9"><path d="M0.5 3h2l3-2.5v8l-3-2.5h-2z" fill="none" stroke="#fff" stroke-width="0.9"/><path d="M7.5 2.5a2.5 2.5 0 0 1 0 4M9.5 1a4.5 4.5 0 0 1 0 7" stroke="#ccc" stroke-width="0.8" fill="none"/></svg>
<div class="t" style="left:951px;top:553px;font-size:8.3px;color:#fff">8:56 AM</div>
<div class="t" style="left:948px;top:564.5px;font-size:8.3px;color:#fff">9/28/2019</div>
<svg style="left:996px;top:556px" width="20" height="18"><path d="M1 1h11v8h-6l-2 2v-2h-3z" fill="#fff" stroke="#ddd" stroke-width="0.5"/><path d="M3 3.5h7M3 5.5h7" stroke="#888" stroke-width="0.8"/><circle cx="11" cy="11" r="5.3" fill="#222" stroke="#555" stroke-width="0.8"/></svg>
<div class="t" style="left:1003px;top:564px;font-size:6.5px;color:#fff;font-weight:bold">14</div>
<svg style="left:0;top:0" width="1024" height="576"><path d="M11.5 35.5h3.5l1 1h5v6h-9.5z" fill="#c8c050" stroke="#333" stroke-width="1"/><path d="M11 38.5h11l-1 4h-9z" fill="#e6e070" stroke="#333" stroke-width="1"/><rect x="27.5" y="33.5" width="11" height="10" fill="#e0e0e0" stroke="#000" stroke-width="1.4"/><rect x="29.5" y="39.5" width="7" height="4" fill="#fff" stroke="#333" stroke-width="1"/><path d="M43.5 34.5h3v1h7.5v8h-10.5z" fill="#e4e068" stroke="#222" stroke-width="1"/><path d="M47 37h3.5v5.5h-3.5z" fill="#5a5a20"/><rect x="48" y="38" width="1.5" height="1.2" fill="#d8d070"/><rect x="48" y="40.2" width="1.5" height="1.2" fill="#d8d070"/><path d="M62 37l1.5-3.5h5.5l-1 3.5z" fill="#fff" stroke="#333" stroke-width="0.8"/><path d="M59.5 37.5h11v4l-1 1.5h-9l-1-1.5z" fill="#b8b060" stroke="#222" stroke-width="1"/><rect x="61" y="39" width="4" height="1" fill="#8899aa"/><path d="M80.5 33.5L85.5 40M88.5 33.5L83.5 40" stroke="#222" stroke-width="1.8" stroke-linecap="round"/><path d="M80.8 34L85 39.5M88.2 34L84 39.5" stroke="#f4f4f4" stroke-width="0.7"/><path d="M84 40l-3.5 3.5M85 40l3.5 3.5" stroke="#333" stroke-width="2.4" stroke-linecap="round"/><path d="M83.5 40.8l-2.5 2.4M85.5 40.8l2.5 2.4" stroke="#888" stroke-width="0.8"/><path d="M96.5 33.5h4l1 1v6.5h-5z" fill="#ccc" stroke="#444" stroke-width="1"/><path d="M99.5 36.5h3.5l2 2v5h-5.5z" fill="#f0f0f0" stroke="#000" stroke-width="1"/><rect x="112.5" y="34.5" width="5" height="8.5" fill="#b8780a" stroke="#222" stroke-width="1"/><rect x="114" y="33" width="2" height="1.5" fill="#111"/><path d="M116.5 37.5h3l2 2v4h-5z" fill="#e4e4e4" stroke="#222" stroke-width="1"/><path d="M128 38l3.5-3v2h4c1.5 0 2 1 2 2.5v3h-2.5v-2.5h-3.5v2z" fill="#f08888" stroke="#333" stroke-width="0.9"/><path d="M149.5 33.5h6l2 2v7.5h-8z" fill="#fcfcfc" stroke="#777" stroke-width="0.6"/><path d="M149 33.5h6.5M155 33.5l2.5 2.5" stroke="#111" stroke-width="1"/><path d="M155 33l2.5 2.8h-2.5z" fill="#111"/><rect x="149" y="43" width="9" height="1" fill="#111"/><path d="M157.5 36v7" stroke="#222" stroke-width="0.9"/><rect x="150.2" y="35" width="0.8" height="7" fill="#3040ff"/><rect x="150.2" y="37.5" width="2" height="0.8" fill="#3040ff"/><rect x="150.2" y="41" width="2.5" height="0.8" fill="#3040ff"/><rect x="153" y="37" width="3" height="0.8" fill="#999"/><rect x="153" y="39" width="3" height="0.8" fill="#aaa"/><path d="M165.5 33.5h6l2 2v7.5h-8z" fill="#fcfcfc" stroke="#777" stroke-width="0.6"/><path d="M165 33.5h6.5M171 33.5l2.5 2.5" stroke="#111" stroke-width="1"/><path d="M171 33l2.5 2.8h-2.5z" fill="#111"/><rect x="165" y="43" width="9" height="1" fill="#111"/><path d="M173.5 36v7" stroke="#222" stroke-width="0.9"/><rect x="168.5" y="37.5" width="3" height="0.8" fill="#999"/><rect x="168.5" y="39.5" width="3" height="0.8" fill="#aaa"/><path d="M181.5 33.5h6l2 2v7.5h-8z" fill="#fcfcfc" stroke="#777" stroke-width="0.6"/><path d="M181 33.5h6.5M187 33.5l2.5 2.5" stroke="#111" stroke-width="1"/><path d="M187 33l2.5 2.8h-2.5z" fill="#111"/><rect x="181" y="43" width="9" height="1" fill="#111"/><path d="M189.5 36v7" stroke="#222" stroke-width="0.9"/><rect x="182.5" y="35" width="0.7" height="7" fill="#4050ff"/><path d="M198.5 33.5h5v1l-1 1v3l2 1.5v1h-3v3h-1v-3h-3v-1l2-1.5v-3l-1-1z" fill="#c4c4c4"/><rect x="212.5" y="34" width="1.5" height="9" fill="#f0b040" stroke="#222" stroke-width="0.6"/><rect x="215" y="38" width="2" height="5" fill="#40d040"/><rect x="217" y="36" width="2" height="7" fill="#f04040"/><rect x="219" y="39" width="2.5" height="4" fill="#5060f0"/><rect x="212" y="43" width="10" height="1" fill="#111"/><rect x="230.5" y="33.5" width="5" height="3" fill="#50e050" stroke="#111" stroke-width="1"/><rect x="227.5" y="40.5" width="4.5" height="3" fill="#50e050" stroke="#111" stroke-width="1"/><rect x="234" y="40.5" width="4.5" height="3" fill="#50e050" stroke="#111" stroke-width="1"/><path d="M233 37v2M229.5 39.5h7" stroke="#555" stroke-width="1" fill="none"/><path d="M244.5 34l4.5 2 4.5-2v8l-4.5 1.5-4.5-1.5z" fill="#f4f4ec" stroke="#555" stroke-width="0.9"/><path d="M249 36v7.5" stroke="#777" stroke-width="0.8"/><path d="M267.5 33.5h3v4h4v3h-4v4h-3v-4h-4v-3h4z" fill="#44dd44" stroke="#1a3a1a" stroke-width="0.8"/><g stroke-linecap="round" stroke-linejoin="round" fill="none"><path d="M285 36.5l-1.5 3.5-2.5 3M284 40l3 1.5 1.5 2M285 37l-3 1.5M285.5 37l2.5 1.5" stroke="#111" stroke-width="2.3"/><path d="M285 36.5l-1.5 3.5-2.5 3M284 40l3 1.5 1.5 2M285 37l-3 1.5M285.5 37l2.5 1.5" stroke="#e01818" stroke-width="1.0"/></g><circle cx="285.5" cy="34.3" r="1.6" fill="#e01818" stroke="#111" stroke-width="0.6"/><path d="M297 34.5l2 2M305 34.5l-2 2M295.5 39h2.5M306.5 39h-2.5M296 43.5l2.5-2M306 43.5l-2.5-2" stroke="#333" stroke-width="0.9"/><ellipse cx="301" cy="40" rx="3.4" ry="3.8" fill="#e02020" stroke="#111" stroke-width="0.8"/><ellipse cx="301" cy="35.8" rx="1.8" ry="1.2" fill="#222"/><path d="M301 37v6.5" stroke="#111" stroke-width="0.7"/><circle cx="299.5" cy="40" r="0.6" fill="#111"/><circle cx="302.5" cy="40" r="0.6" fill="#111"/><rect x="311.5" y="33.5" width="11" height="6.5" fill="#fbf6e0" stroke="#222" stroke-width="1"/><path d="M316 35l2.5 1.8-2.5 1.8z" fill="#e02020"/><path d="M315 40.5l-1.5 4M319 40.5l1.5 4M317 40v3" stroke="#9a7a30" stroke-width="0.9"/><rect x="327.5" y="33.5" width="11" height="10" fill="#5050f8" stroke="#111" stroke-width="1"/><rect x="343.5" y="33.5" width="11" height="10" fill="#48f048" stroke="#111" stroke-width="1"/><rect x="344" y="34" width="10" height="3" fill="#fff"/><path d="M6 75.5l5-4.5v2.5h5.5v4h-5.5v2.5z" fill="#70c8e0" stroke="#111" stroke-width="0.9"/><path d="M32 75.5l-5-4.5v2.5h-5.5v4h5.5v2.5z" fill="#d4d4d4"/><path d="M38.5 71.5h3l1 1h5.5v6.5h-9.5z" fill="#e0dc60" stroke="#444" stroke-width="0.9"/><path d="M43.5 75l2 2h-1.2v3.5h-1.6v-3.5h-1.2z" fill="#3a9ac8" stroke="#111" stroke-width="0.5"/><path d="M62 73.5a4 4 0 1 0 1 4" fill="none" stroke="#111" stroke-width="2.4"/><path d="M62 73.5a4 4 0 1 0 1 4" fill="none" stroke="#70c8e0" stroke-width="1.4"/><path d="M60 71.5l3.5 0.5-0.5 3.5z" fill="#70c8e0" stroke="#111" stroke-width="0.6"/><path d="M70.5 71.5h3l1 1h5.5v6.5h-9.5z" fill="#e0dc60" stroke="#444" stroke-width="0.9"/><path d="M86.5 72.5h3l1 1h5v5.5h-8.5z" fill="#c8c050" stroke="#333" stroke-width="0.9"/><path d="M86 75h10.5l-1 4h-8.5z" fill="#e4e070" stroke="#333" stroke-width="0.8"/><path d="M97 79h4.5l-2.25 2.5z" fill="#111"/><path d="M16.5 313.5h3v4h4v3h-4v4h-3v-4h-4v-3h4z" fill="#44dd44" stroke="#1a3a1a" stroke-width="0.8"/><g stroke-linecap="round" stroke-linejoin="round" fill="none"><path d="M34 317l-1.5 3.5-2.5 3M33 320.5l3 1.5 1.5 2M34 317.5l-3 1.5M34.5 317.5l2.5 1.5" stroke="#111" stroke-width="2.3"/><path d="M34 317l-1.5 3.5-2.5 3M33 320.5l3 1.5 1.5 2M34 317.5l-3 1.5M34.5 317.5l2.5 1.5" stroke="#e01818" stroke-width="1.0"/></g><circle cx="34.5" cy="314.8" r="1.6" fill="#e01818" stroke="#111" stroke-width="0.6"/><path d="M46 314.5l2 2M54 314.5l-2 2M44.5 319h2.5M55.5 319h-2.5M45 323.5l2.5-2M55 323.5l-2.5-2" stroke="#333" stroke-width="0.9"/><ellipse cx="50" cy="320" rx="3.4" ry="3.8" fill="#e02020" stroke="#111" stroke-width="0.8"/><ellipse cx="50" cy="315.8" rx="1.8" ry="1.2" fill="#222"/><path d="M50 317v6.5" stroke="#111" stroke-width="0.7"/><rect x="61.5" y="314" width="10" height="6" fill="#fbf6e0" stroke="#222" stroke-width="1"/><path d="M65.5 315.5l2.5 1.5-2.5 1.5z" fill="#e02020"/><path d="M64.5 320.5l-1.5 4M68.5 320.5l1.5 4" stroke="#9a7a30" stroke-width="0.9"/><path d="M77.5 314.5l4.5 2 4.5-2v8l-4.5 1.5-4.5-1.5z" fill="#f4f4ec" stroke="#555" stroke-width="0.9"/><path d="M82 316.5v7.5" stroke="#777" stroke-width="0.8"/><rect x="94.5" y="315.5" width="7" height="8.5" rx="1.5" fill="#fff" stroke="#333" stroke-width="0.9"/><rect x="95" y="319.5" width="6" height="4" fill="#8090e0"/><rect x="95" y="313.5" width="6" height="1.8" fill="#222"/></svg>
</body></html>
